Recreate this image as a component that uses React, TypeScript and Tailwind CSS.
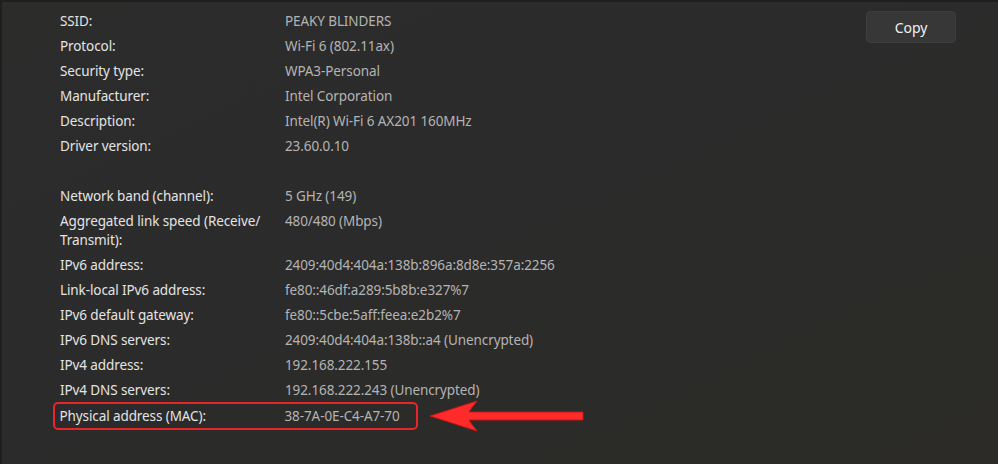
const rows: [string, string][] = [
  ['SSID:', 'PEAKY BLINDERS'],
  ['Protocol:', 'Wi-Fi 6 (802.11ax)'],
  ['Security type:', 'WPA3-Personal'],
  ['Manufacturer:', 'Intel Corporation'],
  ['Description:', 'Intel(R) Wi-Fi 6 AX201 160MHz'],
  ['Driver version:', '23.60.0.10'],
  ['', ''],
  ['Network band (channel):', '5 GHz (149)'],
  ['Aggregated link speed (Receive/ Transmit):', '480/480 (Mbps)'],
  ['IPv6 address:', '2409:40d4:404a:138b:896a:8d8e:357a:2256'],
  ['Link-local IPv6 address:', 'fe80::46df:a289:5b8b:e327%7'],
  ['IPv6 default gateway:', 'fe80::5cbe:5aff:feea:e2b2%7'],
  ['IPv6 DNS servers:', '2409:40d4:404a:138b::a4 (Unencrypted)'],
  ['IPv4 address:', '192.168.222.155'],
  ['IPv4 DNS servers:', '192.168.222.243 (Unencrypted)'],
]

function Arrow() {
  return (
    <svg width="156" height="34" viewBox="0 0 156 34" className="shrink-0">
      <path
        d="M1 17 L48 2 Q40 12 40 13 L154 13 L154 21 L40 21 Q40 22 48 32 Z"
        fill="#ff2a2a"
        stroke="#c81818"
        strokeWidth="1"
        strokeLinejoin="round"
      />
    </svg>
  )
}

export default function App() {
  return (
    <div
      className="w-[998px] h-[464px] overflow-hidden border-t-2 border-l-2 border-[#1f1f1f] bg-gradient-to-br from-[#2c2c2b] via-[#2b2b2b] to-[#2c2b27] text-[13.5px] leading-[19px] tracking-[-0.1px]"
      style={{ fontFamily: '"Segoe UI", "Noto Sans", sans-serif' }}
    >
      <div className="flex justify-between pl-[58px] pr-[42px] pt-[7px]">
        <div className="flex flex-col">
          {rows.map(([label, value], i) => (
            <div key={i} className="grid grid-cols-[225px_1fr] py-[3px] min-h-[25px]">
              <span className="text-[#e4e4e4] pr-[14px]">{label}</span>
              <span className="text-[#b4b4b4]">{value}</span>
            </div>
          ))}
          <div className="flex items-center -mt-[4px]">
            <div className="-ml-[7px] flex h-[28px] w-[365px] items-center rounded-[5px] border-[2.5px] border-[#e8262a] pl-[4.5px]">
              <span className="w-[225px] text-[#e4e4e4]">Physical address (MAC):</span>
              <span className="text-[#b4b4b4]">38-7A-0E-C4-A7-70</span>
            </div>
            <div className="ml-[11px]">
              <Arrow />
            </div>
          </div>
        </div>
        <button className="mt-[2px] h-[32px] w-[90px] rounded-[4px] border border-[#3d3d3d] bg-[#373737] text-[14px] text-[#f0f0f0]">
          Copy
        </button>
      </div>
    </div>
  )
}
